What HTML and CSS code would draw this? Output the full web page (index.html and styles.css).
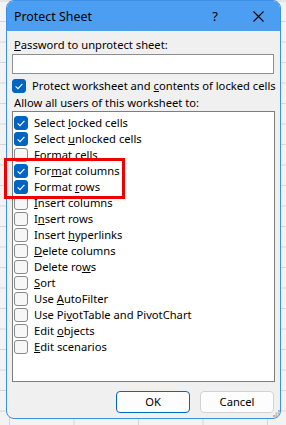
FILE: index.html
```html
<!DOCTYPE html>
<html lang="en">
<head>
    <meta charset="UTF-8">
    <title>Protect Sheet</title>
    <link rel="stylesheet" href="styles.css">
</head>
<body>
    <div class="dialog">
        <div class="titlebar">
            <span class="title">Protect Sheet</span>
            <span class="help">?</span>
            <svg class="close" width="11" height="11" viewBox="0 0 11 11"><path d="M0.5 0.5 L10.5 10.5 M10.5 0.5 L0.5 10.5" stroke="#000" stroke-width="1.1"/></svg>
        </div>
        <div class="content">
            <div class="label"><u>P</u>assword to unprotect sheet:</div>
            <input type="password" class="pwd">
            <div class="check-row">
                <span class="box on"><svg width="14" height="14" viewBox="0 0 14 14"><path d="M3.6 7.3 L6 9.6 L10.4 4.8" fill="none" stroke="#fff" stroke-width="1.1"/></svg></span>
                <span>Protect worksheet and <u>c</u>ontents of locked cells</span>
            </div>
            <div class="label">Allow all users of this worksheet to:</div>
            <div class="list">
                <div class="item"><span class="box on"><svg width="14" height="14" viewBox="0 0 14 14"><path d="M3.6 7.3 L6 9.6 L10.4 4.8" fill="none" stroke="#fff" stroke-width="1.1"/></svg></span><span>Select <u>l</u>ocked cells</span></div>
                <div class="item"><span class="box on"><svg width="14" height="14" viewBox="0 0 14 14"><path d="M3.6 7.3 L6 9.6 L10.4 4.8" fill="none" stroke="#fff" stroke-width="1.1"/></svg></span><span>Select <u>u</u>nlocked cells</span></div>
                <div class="item"><span class="box"></span><span>Format cells</span></div>
                <div class="item"><span class="box on"><svg width="14" height="14" viewBox="0 0 14 14"><path d="M3.6 7.3 L6 9.6 L10.4 4.8" fill="none" stroke="#fff" stroke-width="1.1"/></svg></span><span>For<u>m</u>at columns</span></div>
                <div class="item"><span class="box on"><svg width="14" height="14" viewBox="0 0 14 14"><path d="M3.6 7.3 L6 9.6 L10.4 4.8" fill="none" stroke="#fff" stroke-width="1.1"/></svg></span><span>Format <u>r</u>ows</span></div>
                <div class="item"><span class="box"></span><span><u>I</u>nsert columns</span></div>
                <div class="item"><span class="box"></span><span>I<u>n</u>sert rows</span></div>
                <div class="item"><span class="box"></span><span>Insert <u>h</u>yperlinks</span></div>
                <div class="item"><span class="box"></span><span><u>D</u>elete columns</span></div>
                <div class="item"><span class="box"></span><span>Delete ro<u>w</u>s</span></div>
                <div class="item"><span class="box"></span><span><u>S</u>ort</span></div>
                <div class="item"><span class="box"></span><span>Use <u>A</u>utoFilter</span></div>
                <div class="item"><span class="box"></span><span>Use Pi<u>v</u>otTable and PivotChart</span></div>
                <div class="item"><span class="box"></span><span>Edit <u>o</u>bjects</span></div>
                <div class="item"><span class="box"></span><span><u>E</u>dit scenarios</span></div>
            </div>
            <div class="buttons">
                <button class="btn primary">OK</button>
                <button class="btn">Cancel</button>
            </div>
        </div>
        <svg class="grip" width="7" height="7" viewBox="0 0 7 7">
            <rect x="5" y="0" width="2" height="2" fill="#b5b5b5"/>
            <rect x="2.5" y="2.5" width="2" height="2" fill="#b5b5b5"/>
            <rect x="5" y="2.5" width="2" height="2" fill="#b5b5b5"/>
            <rect x="0" y="5" width="2" height="2" fill="#b5b5b5"/>
            <rect x="2.5" y="5" width="2" height="2" fill="#b5b5b5"/>
            <rect x="5" y="5" width="2" height="2" fill="#b5b5b5"/>
        </svg>
    </div>
    <div class="highlight"></div>
</body>
</html>
```

FILE: styles.css
```css
* {
    box-sizing: border-box;
}
html, body {
    margin: 0;
    height: 100%;
}
body {
    position: relative;
    overflow: hidden;
    font-family: 'Noto Sans', 'Open Sans', sans-serif;
    font-size: 11.2px;
    color: #000;
    background-color: #f3f3f3;
    background-image:
        linear-gradient(to right, #d6d6d6 1px, transparent 1px),
        linear-gradient(to bottom, #d6d6d6 1px, transparent 1px);
    background-size: 64.5px 100%, 100% 20.5px;
    background-position: 9px 0, 0 0.5px;
}
.dialog {
    position: relative;
    margin-left: 6px;
    width: 275px;
    height: 419px;
    background: #f0f0f0;
    border: 1px solid #3d8fe6;
    border-radius: 8px;
    overflow: hidden;
    display: flex;
    flex-direction: column;
}
.titlebar {
    height: 30px;
    background: #4c9ef3;
    display: flex;
    align-items: center;
    padding: 0 0 0 7px;
    line-height: 16px;
}
.title {
    flex: 1;
    margin-top: 1px;
    font-size: 12.4px;
}
.help {
    font-size: 13px;
    margin-right: 35px;
}
.close {
    margin-right: 16px;
}
.content {
    padding: 6px 6px 0 5px;
    line-height: 16px;
}
.label {
    height: 16px;
    padding-left: 2px;
    white-space: nowrap;
}
.pwd {
    display: block;
    width: 262px;
    height: 20px;
    margin: 1px 0 0;
    border: 1px solid #8e8e8e;
    background: #fff;
    outline: none;
}
.check-row {
    display: flex;
    align-items: center;
    gap: 6px;
    height: 16px;
    margin: 4px 0 1px;
    white-space: nowrap;
}
.box {
    width: 14px;
    height: 14px;
    flex: none;
    border: 1px solid #8a8a8a;
    border-radius: 3px;
    background: #f7f7f7;
    display: flex;
}
.box.on {
    border-color: #0064c2;
    background: #0064c2;
}
.box svg {
    margin: -1px;
}
.list {
    width: 263px;
    height: 271px;
    border: 1px solid #7e7e7e;
    background: #fff;
    padding: 3px 0 0 1px;
}
.item {
    display: flex;
    align-items: center;
    gap: 6px;
    height: 16px;
    white-space: nowrap;
}
.buttons {
    display: flex;
    justify-content: flex-end;
    gap: 10px;
    margin-top: 9px;
}
.btn {
    width: 74px;
    height: 22px;
    font: inherit;
    color: #000;
    background: #fdfdfd;
    border: 1px solid #d2d2d2;
    border-radius: 4px;
    padding: 0;
}
.btn.primary {
    border-color: #0067c0;
}
.grip {
    position: absolute;
    right: 0;
    bottom: 1px;
}
.highlight {
    position: absolute;
    left: 4px;
    top: 158px;
    width: 121px;
    height: 41px;
    border: 3px solid #ee0000;
}
```
